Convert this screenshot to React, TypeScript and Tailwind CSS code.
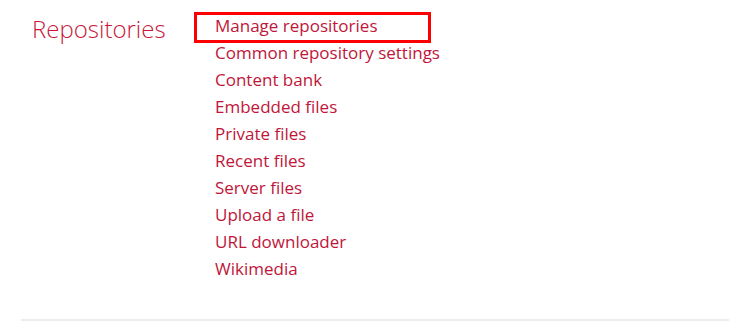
const links = [
  "Manage repositories",
  "Common repository settings",
  "Content bank",
  "Embedded files",
  "Private files",
  "Recent files",
  "Server files",
  "Upload a file",
  "URL downloader",
  "Wikimedia",
]

export default function App() {
  return (
    <div className="h-[333px] w-[753px] bg-white" style={{ fontFamily: '"Open Sans", "Noto Sans", sans-serif' }}>
      <div className="pl-[21px] pr-[24px]">
        <div className="flex pt-[12px] pb-[37px] border-b-2 border-[#ececec]">
          <h3 className="w-[194px] shrink-0 pl-[11px] text-[24px] leading-[34px] font-light text-[#c8163a]">
            Repositories
          </h3>
          <ul className="flex flex-col">
            {links.map((label, i) => (
              <li key={label} className="relative">
                {i === 0 && (
                  <span className="absolute left-[-21px] top-0 h-[31px] w-[237px] border-[3px] border-[#ff0000]" />
                )}
                <a href="#" className="text-[17px] leading-[27px] text-[#c0163a]">
                  {label}
                </a>
              </li>
            ))}
          </ul>
        </div>
      </div>
    </div>
  )
}
